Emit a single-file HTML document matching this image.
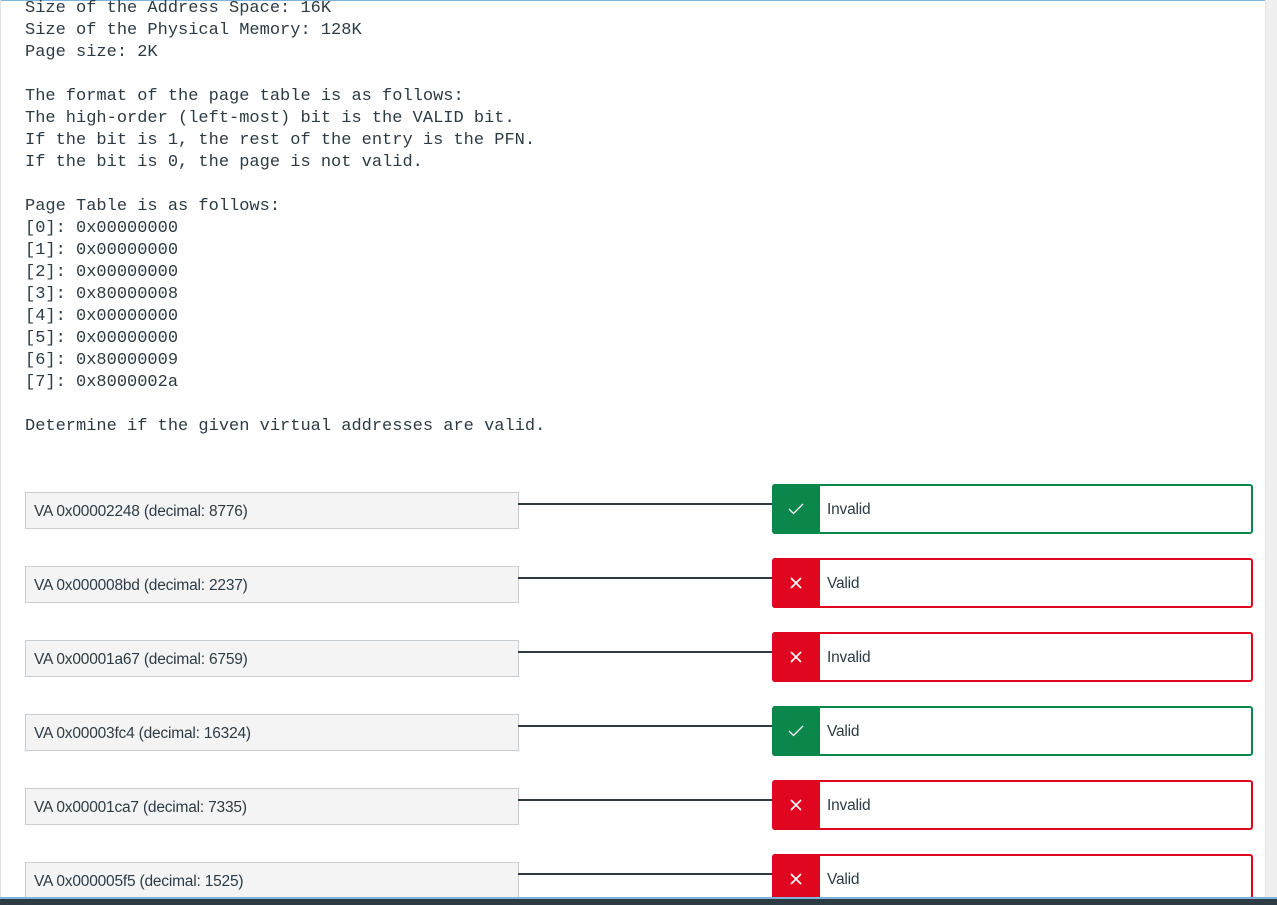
<!DOCTYPE html>
<html><head><meta charset="utf-8"><style>
html,body{margin:0;padding:0;width:1277px;height:905px;overflow:hidden;background:#fff;position:relative}
.top{position:absolute;left:0;top:0;width:1265px;height:1px;background:#7fb3d9}
.leftb{position:absolute;left:0;top:0;width:1px;height:900px;background:#e0e0e0}
.sb{position:absolute;left:1265px;top:0;width:12px;height:905px;background:#f0f0f0;border-left:1px solid #e4e4e4}
pre{position:absolute;left:25px;top:-2px;margin:0;font-family:"Liberation Mono",monospace;font-size:17px;line-height:22px;color:#2d3b45}
.lb{position:absolute;left:25px;width:492px;height:35px;background:#f4f4f4;border:1px solid #c7cdd1;font-family:"Liberation Sans",sans-serif;font-size:15.5px;letter-spacing:-0.2px;color:#2d3b45;line-height:37px;box-sizing:content-box}
.lb span{padding-left:8px}
.ln{position:absolute;left:518px;width:254px;height:2px;background:#2d3b45}
.rb{position:absolute;left:772px;width:477px;height:46px;border:2px solid;border-radius:3px;background:#fff;font-family:"Liberation Sans",sans-serif;font-size:15.5px;letter-spacing:-0.2px;color:#2d3b45}
.rb .ic{position:absolute;left:-2px;top:-2px;width:48px;height:50px;display:flex;align-items:center;justify-content:center;color:#fff;border-radius:3px 0 0 3px}
.rb .t{position:absolute;left:53px;top:15px}
.g{border-color:#0b874b}.g .ic{background:#0b874b}
.r{border-color:#e0061f}.r .ic{background:#e0061f}
.bot{position:absolute;left:0;top:897px;width:1277px;height:2px;background:#7fb3d9}
.bot2{position:absolute;left:0;top:899px;width:1277px;height:6px;background:#2d3b45}
</style></head><body>
<div class="top"></div><div class="leftb"></div><div class="sb"></div>
<pre>Size of the Address Space: 16K
Size of the Physical Memory: 128K
Page size: 2K

The format of the page table is as follows:
The high-order (left-most) bit is the VALID bit.
If the bit is 1, the rest of the entry is the PFN.
If the bit is 0, the page is not valid.

Page Table is as follows:
[0]: 0x00000000
[1]: 0x00000000
[2]: 0x00000000
[3]: 0x80000008
[4]: 0x00000000
[5]: 0x00000000
[6]: 0x80000009
[7]: 0x8000002a

Determine if the given virtual addresses are valid.</pre>

<div class="lb" style="top:492px"><span>VA 0x00002248 (decimal: 8776)</span></div>
<div class="ln" style="top:503px"></div>
<div class="rb g" style="top:484px"><div class="ic"><svg width="16" height="12" viewBox="0 0 16 12"><path d="M1 6l4.5 4.5L15 1" fill="none" stroke="#fff" stroke-width="1.3"/></svg></div><div class="t">Invalid</div></div>

<div class="lb" style="top:566px"><span>VA 0x000008bd (decimal: 2237)</span></div>
<div class="ln" style="top:577px"></div>
<div class="rb r" style="top:558px"><div class="ic"><svg width="12" height="12" viewBox="0 0 12 12"><path d="M1 1l10 10M11 1L1 11" stroke="#fff" stroke-width="1.6"/></svg></div><div class="t">Valid</div></div>

<div class="lb" style="top:640px"><span>VA 0x00001a67 (decimal: 6759)</span></div>
<div class="ln" style="top:651px"></div>
<div class="rb r" style="top:632px"><div class="ic"><svg width="12" height="12" viewBox="0 0 12 12"><path d="M1 1l10 10M11 1L1 11" stroke="#fff" stroke-width="1.6"/></svg></div><div class="t">Invalid</div></div>

<div class="lb" style="top:714px"><span>VA 0x00003fc4 (decimal: 16324)</span></div>
<div class="ln" style="top:725px"></div>
<div class="rb g" style="top:706px"><div class="ic"><svg width="16" height="12" viewBox="0 0 16 12"><path d="M1 6l4.5 4.5L15 1" fill="none" stroke="#fff" stroke-width="1.3"/></svg></div><div class="t">Valid</div></div>

<div class="lb" style="top:788px"><span>VA 0x00001ca7 (decimal: 7335)</span></div>
<div class="ln" style="top:799px"></div>
<div class="rb r" style="top:780px"><div class="ic"><svg width="12" height="12" viewBox="0 0 12 12"><path d="M1 1l10 10M11 1L1 11" stroke="#fff" stroke-width="1.6"/></svg></div><div class="t">Invalid</div></div>

<div class="lb" style="top:862px"><span>VA 0x000005f5 (decimal: 1525)</span></div>
<div class="ln" style="top:873px"></div>
<div class="rb r" style="top:854px"><div class="ic"><svg width="12" height="12" viewBox="0 0 12 12"><path d="M1 1l10 10M11 1L1 11" stroke="#fff" stroke-width="1.6"/></svg></div><div class="t">Valid</div></div>

<div class="bot"></div><div class="bot2"></div>
</body></html>
